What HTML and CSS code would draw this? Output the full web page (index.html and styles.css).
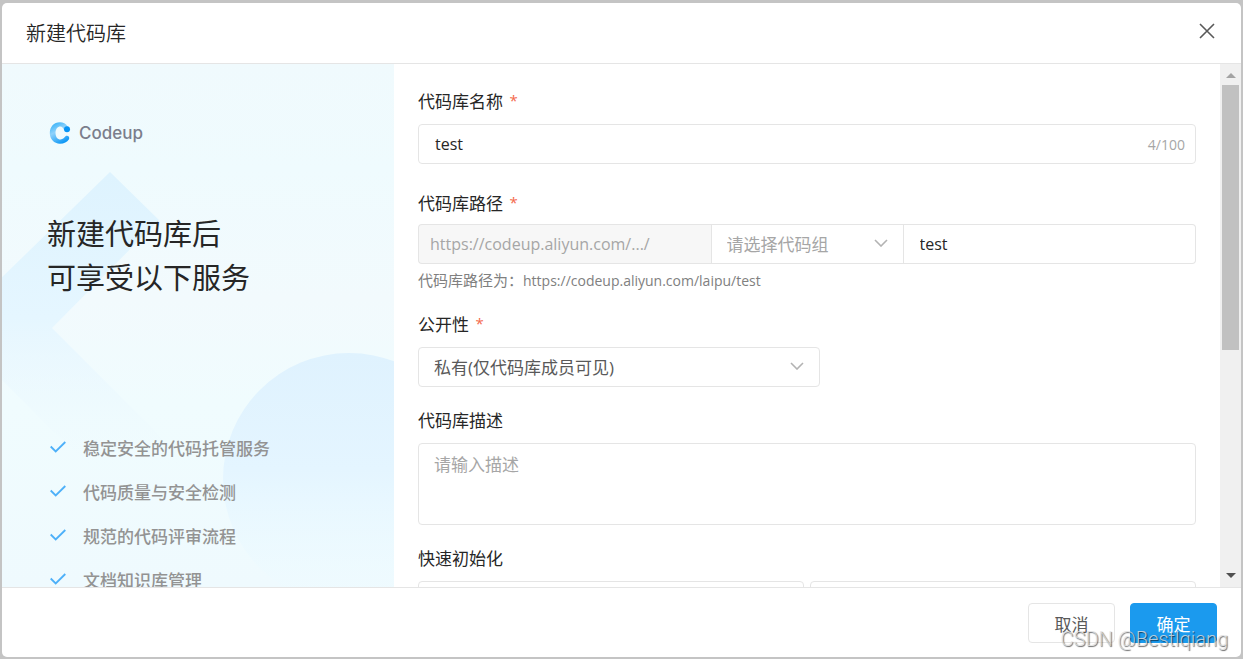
FILE: index.html
```html
<!DOCTYPE html>
<html lang="zh-CN">

<head>
    <meta charset="utf-8">
    <meta name="viewport" content="width=device-width, initial-scale=1">
    <title>新建代码库</title>
    <link rel="stylesheet" href="styles.css">
</head>

<body>
    <div class="dialog" role="dialog" aria-labelledby="dialogTitle">
        <header class="dialog-header">
            <h1 class="dialog-title" id="dialogTitle">新建代码库</h1>
            <button class="btn-close" type="button" aria-label="关闭">
                <svg width="16" height="16" viewBox="0 0 16 16">
                    <path d="M1 1L15 15M15 1L1 15" fill="none" stroke="#595959" stroke-width="1.6" />
                </svg>
            </button>
        </header>

        <div class="dialog-body">
            <!-- 左侧介绍 -->
            <aside class="intro">
                <svg class="intro-bg" width="392" height="524" viewBox="0 0 392 524" aria-hidden="true">
                    <defs>
                        <linearGradient id="arrowFill" gradientUnits="userSpaceOnUse" x1="0" y1="108" x2="0" y2="400">
                            <stop offset="0" stop-color="#def3fe" />
                            <stop offset="0.5" stop-color="#e5f6ff" />
                            <stop offset="1" stop-color="#eef9fe" stop-opacity="0" />
                        </linearGradient>
                        <linearGradient id="circleFill" gradientUnits="userSpaceOnUse" x1="0" y1="288" x2="0" y2="524">
                            <stop offset="0" stop-color="#dff2fe" />
                            <stop offset="0.5" stop-color="#e4f5ff" />
                            <stop offset="1" stop-color="#eefbff" stop-opacity="0.5" />
                        </linearGradient>
                    </defs>
                    <path d="M108 108L157 156L50 264L190 404H88L-52 264Z" fill="url(#arrowFill)" />
                    <circle cx="347" cy="415" r="126" fill="url(#circleFill)" />
                </svg>
                <div class="intro-content">
                    <div class="brand">
                        <svg width="22" height="22" viewBox="0 0 22 22" aria-hidden="true">
                            <defs>
                                <linearGradient id="logoFill" x1="0.2" y1="0" x2="0.7" y2="1">
                                    <stop offset="0" stop-color="#36b2f8" />
                                    <stop offset="0.4" stop-color="#8fd2fb" />
                                    <stop offset="1" stop-color="#0694f5" />
                                </linearGradient>
                            </defs>
                            <path d="M19 5C17 1.500 14 0.300 11 0.300C4.800 0.300 0.800 5 0.800 11C0.800 17 5 21.700 11 21.700C15 21.700 18 20 20 17.200C21 15.200 19 13 16.800 14C15.500 15 14 17.500 11.500 17.500C8.500 17.500 6.500 14.800 6.500 11C6.500 7 8.500 4.400 11.500 4.400C13 4.400 14 6 15.500 8Z" fill="url(#logoFill)" />
                            <circle cx="18" cy="7.300" r="3" fill="#0694f5" />
                        </svg>
                        <span>Codeup</span>
                    </div>
                    <h2 class="intro-title">新建代码库后<br>可享受以下服务</h2>
                    <ul class="features">
                        <li><svg width="16" height="12" viewBox="0 0 16 12"><path d="M0.7 5.500L5.700 10.500L15.300 1" /></svg>稳定安全的代码托管服务</li>
                        <li><svg width="16" height="12" viewBox="0 0 16 12"><path d="M0.7 5.500L5.700 10.500L15.300 1" /></svg>代码质量与安全检测</li>
                        <li><svg width="16" height="12" viewBox="0 0 16 12"><path d="M0.7 5.500L5.700 10.500L15.300 1" /></svg>规范的代码评审流程</li>
                        <li><svg width="16" height="12" viewBox="0 0 16 12"><path d="M0.7 5.500L5.700 10.500L15.300 1" /></svg>文档知识库管理</li>
                    </ul>
                </div>
            </aside>

            <!-- 右侧表单 -->
            <form class="form" id="repoForm">
                <div class="form-item">
                    <label for="repoName">代码库名称 <span class="required">*</span></label>
                    <div class="input-box">
                        <input type="text" id="repoName" value="test" maxlength="100">
                        <span class="count">4/100</span>
                    </div>
                </div>

                <div class="form-item form-item-path">
                    <label for="repoPath">代码库路径 <span class="required">*</span></label>
                    <div class="path-group">
                        <input class="path-prefix" type="text" value="https://codeup.aliyun.com/.../" aria-label="路径前缀" disabled>
                        <div class="select-box path-select">
                            <select class="empty" aria-label="代码组">
                                <option>请选择代码组</option>
                            </select>
                            <svg class="arrow" width="14" height="8" viewBox="0 0 14 8"><path d="M1 1L7 7L13 1" /></svg>
                        </div>
                        <input class="path-name" type="text" id="repoPath" value="test">
                    </div>
                    <p class="hint">代码库路径为：<span class="hint-url">https://codeup.aliyun.com/laipu/test</span></p>
                </div>

                <div class="form-item">
                    <label for="visibility">公开性 <span class="required">*</span></label>
                    <div class="select-box visibility">
                        <select id="visibility">
                            <option>私有(仅代码库成员可见)</option>
                        </select>
                        <svg class="arrow" width="14" height="8" viewBox="0 0 14 8"><path d="M1 1L7 7L13 1" /></svg>
                    </div>
                </div>

                <div class="form-item">
                    <label for="description">代码库描述</label>
                    <textarea id="description" placeholder="请输入描述"></textarea>
                </div>

                <div class="form-item">
                    <label>快速初始化</label>
                    <div class="init-row">
                        <div class="init-card"></div>
                        <div class="init-card"></div>
                    </div>
                </div>
            </form>

            <div class="scrollbar" aria-hidden="true">
                <svg width="10" height="5" viewBox="0 0 10 5"><path d="M0 5L5 0L10 5Z" fill="#a3a3a3" /></svg>
                <div class="scrollbar-track">
                    <div class="scrollbar-thumb"></div>
                </div>
                <svg width="10" height="5" viewBox="0 0 10 5"><path d="M0 0L5 5L10 0Z" fill="#505050" /></svg>
            </div>
        </div>

        <footer class="dialog-footer">
            <button class="btn" type="button">取消</button>
            <button class="btn btn-primary" type="submit" form="repoForm">确定</button>
        </footer>
    </div>
    <div class="watermark">CSDN @Bestlqiang</div>
</body>

</html>
```

FILE: styles.css
```css
* {
    box-sizing: border-box;
}

body {
    margin: 0;
    height: 100vh;
    padding: 3px 2px 2px;
    background: #c4c4c4;
    font-family: "Open Sans", "Noto Sans CJK SC", sans-serif;
    font-size: 17px;
    color: #262626;
    overflow: hidden;
}

input,
select,
textarea,
button {
    font: inherit;
    color: inherit;
    margin: 0;
}

.dialog {
    height: 100%;
    display: flex;
    flex-direction: column;
    background: #fff;
    border-radius: 5px;
    overflow: hidden;
}

/* 头部 */
.dialog-header {
    flex: none;
    height: 61px;
    padding: 0 24px 2px;
    display: flex;
    align-items: center;
    justify-content: space-between;
    border-bottom: 1px solid #e5e5e5;
}

.dialog-title {
    margin: 0;
    font-size: 20px;
    font-weight: 350;
}

.btn-close {
    display: flex;
    padding: 2px;
    margin-bottom: 2px;
    border: none;
    background: none;
    cursor: pointer;
}

.dialog-body {
    flex: 1;
    min-height: 0;
    display: flex;
    overflow: hidden;
}

/* 左侧介绍 */
.intro {
    flex: none;
    width: 392px;
    position: relative;
    overflow: hidden;
    background: linear-gradient(#f0fafd, #effbfe 20%, #f2fafd 45%, #f0fcfe 65%, #effafe);
}

.intro-bg {
    position: absolute;
    top: 0;
    left: 0;
}

.intro-content {
    position: relative;
    padding: 56px 45px 0;
}

.brand {
    display: flex;
    align-items: center;
    gap: 8px;
    height: 26px;
    padding-left: 2px;
    font-family: Inter, sans-serif;
    font-size: 17px;
    font-weight: 500;
    color: #7b7e8c;
}

.intro-title {
    margin: 66px 0 0;
    font-size: 29px;
    line-height: 44px;
    font-weight: 400;
}

.features {
    margin: 125px 0 0;
    padding: 0 3px;
    list-style: none;
    font-weight: 500;
    color: #939393;
}

.features li {
    display: flex;
    align-items: center;
    gap: 17px;
    height: 44px;
    white-space: nowrap;
}

.features path {
    fill: none;
    stroke: #4db0f9;
    stroke-width: 1.8;
}

/* 表单 */
.form {
    flex: 1;
    min-width: 0;
    padding: 26px 24px 0;
    display: flex;
    flex-direction: column;
    gap: 22px;
}

.form-item label {
    display: block;
    height: 24px;
    line-height: 24px;
    margin-bottom: 10px;
}

.form-item-path {
    padding-top: 6px;
}

.form-item-path label {
    margin-bottom: 8px;
}

.required {
    margin-left: 2px;
    color: #f4694c;
    font-size: 15px;
    line-height: 1;
    vertical-align: 2px;
}

.input-box,
.select-box,
.path-prefix,
.path-name,
textarea,
.init-card {
    border: 1px solid #e5e5e5;
    border-radius: 4px;
    background: #fff;
}

.input-box {
    display: flex;
    align-items: center;
    height: 40px;
    padding: 0 10px 0 16px;
}

.input-box input {
    flex: 1;
    min-width: 0;
    padding: 0;
    border: none;
    outline: none;
    font-size: 16px;
}

.count {
    font-size: 14px;
    color: #a6a6a6;
}

.select-box {
    display: flex;
    align-items: center;
    height: 40px;
    position: relative;
}

.select-box select {
    width: 100%;
    height: 100%;
    padding: 0 40px 0 15px;
    border: none;
    background: none;
    appearance: none;
    outline: none;
    color: #595959;
}

.select-box select.empty {
    color: #a6a6a6;
}

/* 下拉箭头盖在 select 上面 */
.arrow {
    position: absolute;
    right: 15px;
    top: 14px;
    pointer-events: none;
}

.arrow path {
    fill: none;
    stroke: #b3b3b3;
    stroke-width: 1.6;
}

.path-group {
    display: grid;
    grid-template-columns: 1fr 193px 1fr;
}

.path-prefix,
.path-name {
    min-width: 0;
    height: 40px;
    outline: none;
    font-size: 16px;
}

.path-prefix {
    padding: 0 11px;
    border-right: none;
    border-radius: 4px 0 0 4px;
    background: #f7f7f7;
    color: #a6a6a6;
}

.path-select {
    border-radius: 0;
}

.path-name {
    padding: 0 16px;
    border-left: none;
    border-radius: 0 4px 4px 0;
}

.hint {
    margin: 6px 0 0;
    font-size: 15px;
    line-height: 20px;
    color: #808080;
}

.hint-url {
    font-size: 14px;
}

.visibility {
    width: 402px;
}

textarea {
    display: block;
    width: 100%;
    height: 82px;
    padding: 9px 15px;
    line-height: 24px;
    resize: none;
    outline: none;
}

textarea::placeholder {
    color: #a6a6a6;
}

.init-row {
    display: grid;
    grid-template-columns: 1fr 1fr;
    gap: 6px;
}

.init-card {
    height: 80px;
}

/* 滚动条 */
.scrollbar {
    flex: none;
    width: 21px;
    padding: 9px 2px;
    display: flex;
    flex-direction: column;
    align-items: center;
    gap: 7px;
    background: #f0f0f0;
}

.scrollbar svg {
    flex: none;
}

.scrollbar-track {
    flex: 1;
    width: 100%;
}

.scrollbar-thumb {
    height: 55%;
    background: #c1c1c1;
}

/* 底部按钮 */
.dialog-footer {
    flex: none;
    display: flex;
    justify-content: flex-end;
    gap: 15px;
    padding: 15px 24px 14px;
    border-top: 1px solid #e5e5e5;
}

.btn {
    width: 87px;
    height: 40px;
    padding: 0;
    border: 1px solid #e5e5e5;
    border-radius: 4px;
    background: #fff;
    color: #595959;
    cursor: pointer;
}

.btn-primary {
    border-color: #1b9aee;
    background: #1b9aee;
    color: #fff;
}

.watermark {
    position: absolute;
    right: 15px;
    bottom: 8px;
    font-family: Roboto, sans-serif;
    font-size: 20px;
    font-weight: 300;
    line-height: 24px;
    color: rgba(225, 225, 225, 0.8);
    text-shadow: 1px 1px 1px rgba(0, 0, 0, 0.6);
    pointer-events: none;
}
```
